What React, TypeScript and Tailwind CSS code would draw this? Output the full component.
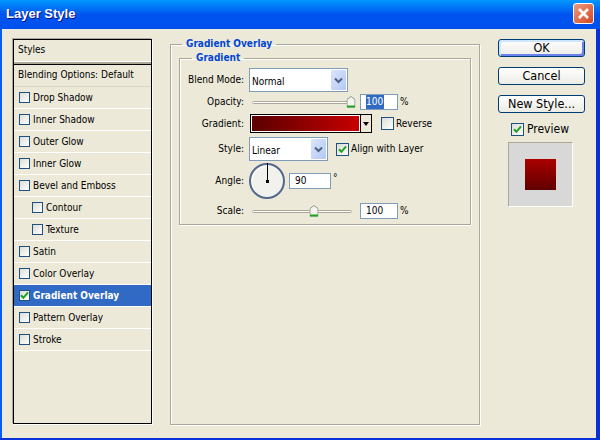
import type { ReactNode } from "react";

const styleRows = [
  { label: "Drop Shadow" },
  { label: "Inner Shadow" },
  { label: "Outer Glow" },
  { label: "Inner Glow" },
  { label: "Bevel and Emboss" },
  { label: "Contour", nested: true },
  { label: "Texture", nested: true },
  { label: "Satin" },
  { label: "Color Overlay" },
  { label: "Gradient Overlay", checked: true, active: true },
  { label: "Pattern Overlay" },
  { label: "Stroke" },
];

function Checkbox({ checked = false, small = false }: { checked?: boolean; small?: boolean }) {
  return (
    <span
      className={`flex shrink-0 items-center justify-center border border-[#1c5180] bg-gradient-to-br from-[#dcdcd7] to-white ${
        small ? "h-[11px] w-[11px]" : "h-[13px] w-[13px]"
      }`}
    >
      {checked && (
        <svg width="9" height="9" viewBox="0 0 9 9">
          <path d="M1 4.2 L3.4 6.8 L8 1.4" fill="none" stroke="#21a121" strokeWidth="2" />
        </svg>
      )}
    </span>
  );
}

function Select({ value, width }: { value: string; width: string }) {
  return (
    <div className={`flex h-[24px] items-center justify-between border border-[#7f9db9] bg-white pl-[2px] pr-[1px] ${width}`}>
      <span className="mt-[3px]">{value}</span>
      <span className="flex h-[20px] w-[15px] items-center justify-center rounded-[1px] bg-gradient-to-br from-[#dbe5fb] to-[#b3c8f6]">
        <svg width="9" height="7" viewBox="0 0 9 7">
          <path d="M1 1.5 L4.5 5 L8 1.5" fill="none" stroke="#4d6185" strokeWidth="2" />
        </svg>
      </span>
    </div>
  );
}

function NumberBox({ value, width, selected }: { value: string; width: string; selected?: boolean }) {
  return (
    <div className={`flex h-[16px] items-center border border-[#7f9db9] bg-white pl-[5px] ${width}`}>
      <span className={selected ? "bg-[#316ac5] pr-[1px] text-white" : ""}>{value}</span>
    </div>
  );
}

function Slider({ position }: { position: number }) {
  return (
    <div className="relative h-[3px] w-[100px] rounded-full border border-[#aca899] bg-white">
      <svg
        className="absolute top-[-6px] -translate-x-1/2"
        style={{ left: `${position}%` }}
        width="9"
        height="12"
        viewBox="0 0 9 12"
      >
        <path d="M0.5 11 V3.5 L4.5 0.5 L8.5 3.5 V11 Z" fill="#f4f4ee" stroke="#8f978f" />
        <rect x="0.5" y="9.5" width="8" height="2" fill="#21a121" />
      </svg>
    </div>
  );
}

function Row({ label, className = "", children }: { label: string; className?: string; children: ReactNode }) {
  return (
    <div className={`flex items-center ${className}`}>
      <span className="w-[64px] shrink-0 text-right">{label}</span>
      <div className="ml-[5px] flex items-center">{children}</div>
    </div>
  );
}

function PushButton({ label, isDefault }: { label: string; isDefault?: boolean }) {
  return (
    <div
      className={`flex h-[18px] w-[87px] items-center justify-center rounded-[3px] border border-[#003c74] bg-gradient-to-b from-white to-[#ecebe5] text-[12.5px] leading-none ${
        isDefault ? "shadow-[inset_2px_2px_0_#cee7ff,inset_-2px_-2px_0_#6982ee]" : ""
      }`}
    >
      {label}
    </div>
  );
}

export default function App() {
  return (
    <div className="flex h-[440px] w-[600px] flex-col overflow-hidden bg-[#0831d9] font-['DejaVu_Sans_Condensed','DejaVu_Sans',sans-serif] text-[10px] leading-[14px] text-black">
      {/* Title bar */}
      <div className="flex h-[29px] shrink-0 items-center justify-between bg-gradient-to-b from-[#0997ff] via-[#0053ee] to-[#0050ee] pl-[6px] pr-[6px]">
        <span className="-mt-[2px] font-['Liberation_Sans',sans-serif] text-[13px] font-bold text-white [text-shadow:1px_1px_0_#0f1089]">Layer Style</span>
        <div className="-mt-[3px] flex h-[21px] w-[21px] items-center justify-center rounded-[3px] border border-white bg-gradient-to-br from-[#ec9a80] to-[#d2431c]">
          <svg width="13" height="13" viewBox="0 0 13 13">
            <path d="M2 2 L11 11 M11 2 L2 11" stroke="white" strokeWidth="2.6" />
          </svg>
        </div>
      </div>

      {/* Window body */}
      <div className="mb-[2px] mr-[4px] flex min-h-0 flex-1 border-l-2 border-[#0a5cf0] bg-[#ece9d8] bg-clip-padding">
        {/* Styles list */}
        <div className="ml-[11px] mt-[10px] flex h-[385px] w-[139px] flex-col border border-black shadow-[-1px_-1px_0_#aca899,1px_1px_0_white]">
          <div className="flex h-[22px] shrink-0 items-center border-b border-white pb-[2px] pl-[4px]">Styles</div>
          <div className="h-[2px] shrink-0 bg-[#aca899]" />
          <div className="h-[1px] shrink-0 bg-black" />
          <div className="flex h-[22px] shrink-0 items-center border-b border-[#d8d5c4] pb-[2px] pl-[4px]">Blending Options: Default</div>
          {styleRows.map((row) => (
            <div
              key={row.label}
              className={`flex h-[22px] shrink-0 items-center gap-[3px] border-b border-white ${row.nested ? "pl-[18px]" : "pl-[5px]"} ${
                row.active ? "bg-[#316ac5] font-bold text-white" : ""
              }`}
            >
              <Checkbox small checked={row.checked} />
              <span>{row.label}</span>
            </div>
          ))}
        </div>

        {/* Gradient overlay settings */}
        <div className="ml-[18px] mt-[8px] h-[388px] w-[310px]">
          <fieldset className="h-full border border-[#aca899] px-[8px] shadow-[inset_1px_1px_0_white,1px_1px_0_white]">
            <legend className="ml-[3px] px-[4px] font-bold text-[#0046d5]">Gradient Overlay</legend>
            <fieldset className="h-[174px] w-[292px] border border-[#aca899] shadow-[inset_1px_1px_0_white,1px_1px_0_white]">
              <legend className="ml-[12px] px-[4px] font-bold text-[#0046d5]">Gradient</legend>
              <div className="flex flex-col">
                <Row label="Blend Mode:" className="mt-[3px]">
                  <Select value="Normal" width="w-[99px]" />
                </Row>
                <Row label="Opacity:" className="mt-[2px]">
                  <div className="ml-[3px]">
                    <Slider position={100} />
                  </div>
                  <div className="ml-[8px]">
                    <NumberBox value="100" width="w-[38px]" selected />
                  </div>
                  <span className="ml-[2px]">%</span>
                </Row>
                <Row label="Gradient:" className="mt-[4px]">
                  <div className="ml-[1px] flex h-[19px] w-[122px] border border-black">
                    <div className="flex-1 border border-white bg-gradient-to-r from-[#5c0000] to-[#c80000]" />
                    <div className="flex w-[11px] items-center justify-center border-l border-black bg-[#ece9d8]">
                      <div className="h-0 w-0 border-x-[3px] border-t-[4px] border-x-transparent border-t-black" />
                    </div>
                  </div>
                  <div className="ml-[9px] flex items-center gap-[2px]">
                    <Checkbox />
                    <span>Reverse</span>
                  </div>
                </Row>
                <Row label="Style:" className="mt-[4px]">
                  <Select value="Linear" width="w-[79px]" />
                  <div className="ml-[8px] flex items-center gap-[2px]">
                    <Checkbox checked />
                    <span>Align with Layer</span>
                  </div>
                </Row>
                <Row label="Angle:" className="mt-[2px]">
                  <div className="relative h-[36px] w-[36px] rounded-full border-2 border-[#54688f] bg-[#f1f1ee] shadow-[inset_1px_1px_2px_white]">
                    <div className="absolute -top-[2px] left-[16px] h-[18px] w-[1px] bg-black" />
                    <div className="absolute left-[15px] top-[15px] h-[3px] w-[3px] bg-black" />
                  </div>
                  <div className="ml-[4px]">
                    <NumberBox value="90" width="w-[42px]" />
                  </div>
                  <span className="-mt-[6px] ml-[2px]">°</span>
                </Row>
                <Row label="Scale:" className="mt-[4px]">
                  <div className="ml-[3px]">
                    <Slider position={62} />
                  </div>
                  <div className="ml-[8px]">
                    <NumberBox value="100" width="w-[38px]" />
                  </div>
                  <span className="ml-[2px]">%</span>
                </Row>
              </div>
            </fieldset>
          </fieldset>
        </div>

        {/* Buttons and preview */}
        <div className="ml-[18px] mt-[10px] flex w-[87px] flex-col">
          <div className="flex flex-col gap-[10px]">
            <PushButton label="OK" isDefault />
            <PushButton label="Cancel" />
            <PushButton label="New Style..." />
          </div>
          <div className="ml-[13px] mt-[9px] flex items-center gap-[3px] text-[12px]">
            <Checkbox checked />
            <span>Preview</span>
          </div>
          <div className="ml-[10px] mt-[6px] flex h-[65px] w-[65px] items-center justify-center border border-[#aca899] border-b-white border-r-white bg-[#d8d8d8]">
            <div className="h-[31px] w-[31px] bg-gradient-to-b from-[#ac0000] to-[#600000]" />
          </div>
        </div>
      </div>
    </div>
  );
}
